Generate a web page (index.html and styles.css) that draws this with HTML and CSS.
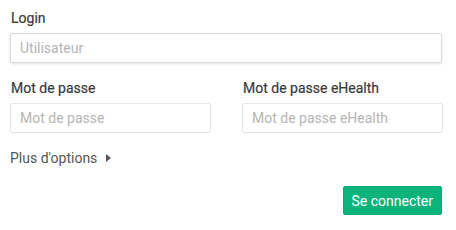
FILE: index.html
```html
<!DOCTYPE html>
<html lang="fr">
<head>
    <meta charset="UTF-8">
    <meta name="viewport" content="width=device-width, initial-scale=1.0">
    <title>Connexion</title>
    <link rel="stylesheet" href="styles.css">
</head>
<body>
    <form class="login-form">
        <div class="field">
            <label class="label" for="user">Login</label>
            <input class="input input-main" id="user" type="text" placeholder="Utilisateur">
        </div>
        <div class="row">
            <div class="field">
                <label class="label" for="pass">Mot de passe</label>
                <input class="input" id="pass" type="password" placeholder="Mot de passe">
            </div>
            <div class="field">
                <label class="label" for="ehealth">Mot de passe eHealth</label>
                <input class="input" id="ehealth" type="password" placeholder="Mot de passe eHealth">
            </div>
        </div>
        <div class="more">Plus d'options <span class="caret"></span></div>
        <div class="actions">
            <button class="btn" type="button">Se connecter</button>
        </div>
    </form>
</body>
</html>
```

FILE: styles.css
```css
body{
    margin: 0;
    background: #fff;
    font-family: Roboto, "Liberation Sans", sans-serif;
    font-size: 14px;
    color: #333;
}
.login-form{
    width: 432px;
    padding: 8px 0 0 10px;
}
.field{
    display: flex;
    flex-direction: column;
    margin-bottom: 15px;
}
.label{
    font-weight: 400;
    -webkit-text-stroke: 0.2px #3b3b3b;
    line-height: 20px;
    margin-bottom: 5px;
    padding-left: 1px;
    color: #3b3b3b;
}
.input{
    box-sizing: border-box;
    height: 30px;
    padding: 0 9px;
    border: 1px solid #e6e6e6;
    border-radius: 2px;
    font-family: inherit;
    font-size: 14px;
    color: #333;
    outline: none;
}
.input::placeholder{
    color: #b5b5b5;
}
.input-main{
    border-color: #d9d9d9;
    box-shadow: 0 1px 3px rgba(0,0,0,0.12);
}
.row{
    display: grid;
    grid-template-columns: 201px 201px;
    column-gap: 31px;
}
.more{
    line-height: 20px;
    color: #555;
    display: flex;
    align-items: center;
}
.caret{
    display: inline-block;
    width: 0;
    height: 0;
    margin-left: 9px;
    border-top: 4px solid transparent;
    border-bottom: 4px solid transparent;
    border-left: 5px solid #555;
}
.actions{
    display: flex;
    justify-content: flex-end;
    margin-top: 18px;
}
.btn{
    height: 29px;
    padding: 0 8px;
    border: 1px solid #0bab74;
    border-radius: 2px;
    background: #0cb47b;
    color: #fff;
    font-family: inherit;
    font-size: 14px;
}
```
